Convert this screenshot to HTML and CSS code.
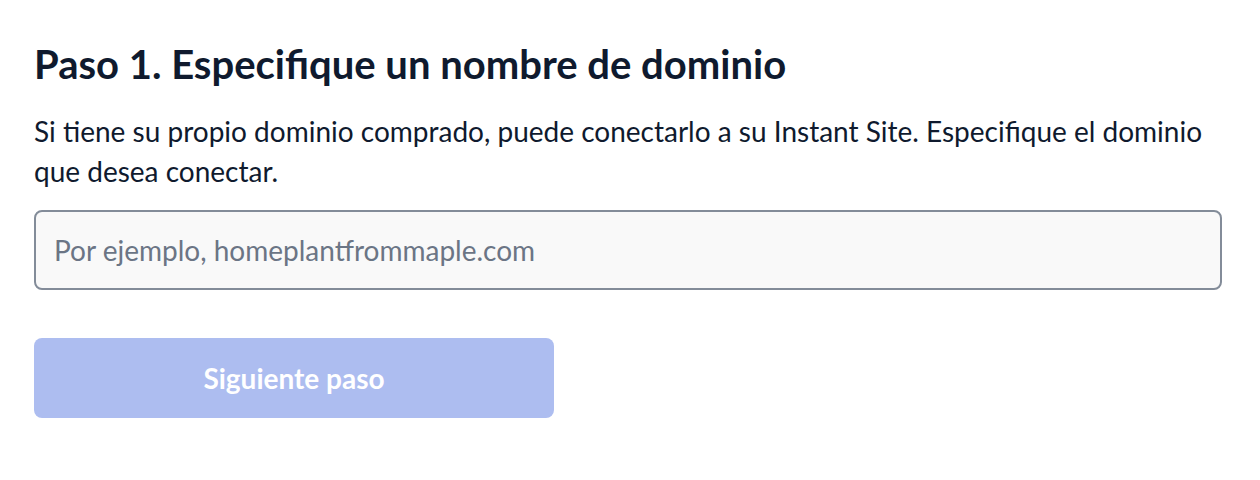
FILE: index.html
```html
<!DOCTYPE html>
<html lang="es">
<head>
    <meta charset="UTF-8">
    <meta name="viewport" content="width=device-width, initial-scale=1.0">
    <title>Paso 1</title>
    <link rel="stylesheet" href="styles.css">
</head>
<body>
    <div class="step">
        <h1 class="step-title">Paso 1. Especifique un nombre de dominio</h1>
        <p class="step-text">Si tiene su propio dominio comprado, puede conectarlo a su Instant Site. Especifique el dominio que desea conectar.</p>
        <input class="domain-input" type="text" placeholder="Por ejemplo, homeplantfrommaple.com">
        <button class="next-button" disabled>Siguiente paso</button>
    </div>
</body>
</html>
```

FILE: styles.css
```css
body {
    margin: 0;
    font-family: Lato, "Noto Sans", sans-serif;
    color: #0f1a2e;
    background: #fff;
}
.step {
    padding: 40px 38px 0 34px;
}
.step-title {
    font-size: 40px;
    font-weight: 700;
    line-height: 48px;
    margin: 0 0 23px;
}
.step-text {
    font-size: 28px;
    line-height: 40px;
    margin: 0 0 19px;
}
.domain-input {
    display: block;
    box-sizing: border-box;
    width: 100%;
    height: 80px;
    padding: 0 18px;
    border: 2px solid #838c99;
    border-radius: 8px;
    background: #f9f9f9;
    font-family: inherit;
    font-size: 28px;
    color: #0f1a2e;
}
.domain-input::placeholder {
    color: #6b7585;
}
.next-button {
    display: block;
    width: 520px;
    height: 80px;
    margin-top: 48px;
    border: none;
    border-radius: 8px;
    background: #adbdf0;
    color: #fff;
    font-family: inherit;
    font-size: 28px;
    font-weight: 700;
}
```
